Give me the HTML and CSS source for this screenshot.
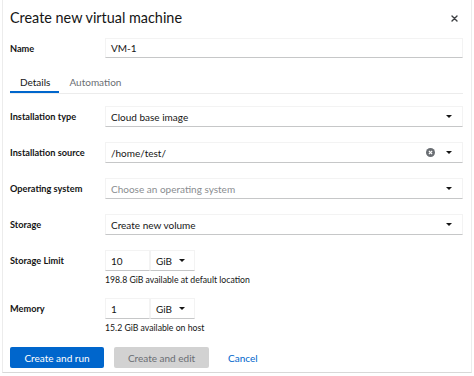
FILE: index.html
```html
<!DOCTYPE html>
<html>
<head>
<meta charset="utf-8">
<link rel="stylesheet" href="styles.css">
</head>
<body>
<div class="modal">
  <header class="header">
    <h1 class="title">Create new virtual machine</h1>
    <button class="close" aria-label="Close">
      <svg width="7" height="7" viewBox="0 0 7 7"><path d="M1 1L6 6M6 1L1 6" stroke="#3c3f42" stroke-width="1.4" stroke-linecap="round"/></svg>
    </button>
  </header>

  <div class="row row-name">
    <label class="label">Name</label>
    <div class="control"><span class="value">VM-1</span></div>
  </div>

  <nav class="tabs">
    <span class="tab active">Details</span>
    <span class="tab">Automation</span>
  </nav>

  <div class="form">
    <div class="row">
      <label class="label">Installation type</label>
      <div class="control select"><span class="value">Cloud base image</span><span class="caret"></span></div>
    </div>
    <div class="row">
      <label class="label">Installation source</label>
      <div class="control select"><span class="value">/home/test/</span>
        <svg class="clear" width="9" height="9" viewBox="0 0 10 10"><circle cx="5" cy="5" r="5" fill="#6a6e73"/><path d="M3.2 3.2L6.8 6.8M6.8 3.2L3.2 6.8" stroke="#fff" stroke-width="1.4"/></svg>
        <span class="caret"></span></div>
    </div>
    <div class="row">
      <label class="label">Operating system</label>
      <div class="control select"><span class="value placeholder">Choose an operating system</span><span class="caret"></span></div>
    </div>
    <div class="row">
      <label class="label">Storage</label>
      <div class="control select"><span class="value">Create new volume</span><span class="caret"></span></div>
    </div>
    <div class="row row-size">
      <label class="label">Storage Limit</label>
      <div class="size">
        <div class="size-inputs">
          <div class="control num"><span class="value">10</span></div>
          <div class="control unit"><span class="value">GiB</span><span class="caret"></span></div>
        </div>
        <div class="helper">198.8 GiB available at default location</div>
      </div>
    </div>
    <div class="row row-size row-mem">
      <label class="label">Memory</label>
      <div class="size">
        <div class="size-inputs">
          <div class="control num"><span class="value">1</span></div>
          <div class="control unit"><span class="value">GiB</span><span class="caret"></span></div>
        </div>
        <div class="helper">15.2 GiB available on host</div>
      </div>
    </div>
  </div>

  <footer class="footer">
    <button class="btn primary">Create and run</button>
    <button class="btn disabled">Create and edit</button>
    <button class="btn link">Cancel</button>
  </footer>
</div>
</body>
</html>
```
FILE: styles.css
```css
html, body {
  margin: 0;
  padding: 0;
  background: #fff;
}
body {
  font-family: "Lato", "Open Sans", sans-serif;
  color: #151515;
  width: 474px;
  height: 376px;
  overflow: hidden;
}
.modal {
  margin-left: 2px;
  width: 453px;
  height: 372px;
  border-left: 1px solid #ececec;
  border-right: 1px solid #ececec;
  border-bottom: 1px solid #d8d8d8;
  padding: 0 8px 0 7px;
  box-sizing: content-box;
  display: flex;
  flex-direction: column;
}
.header {
  display: flex;
  align-items: center;
  justify-content: space-between;
  height: 20px;
  margin-top: 8px;
}
.title {
  margin: 0;
  font-family: "Lato", "Open Sans", sans-serif;
  font-weight: 400;
  font-size: 14.4px;
  line-height: 20px;
}
.close {
  border: 0;
  background: none;
  padding: 0;
  margin-right: 5px;
  width: 7px;
  height: 7px;
  display: flex;
}
.row {
  display: flex;
  align-items: center;
}
.row-name {
  margin-top: 10px;
}
.label {
  width: 95px;
  flex: none;
  font-size: 9.2px;
  font-weight: 700;
}
.control {
  flex: 1;
  height: 20px;
  box-sizing: border-box;
  border: 1px solid #f3f3f3;
  border-bottom-color: #c6c7c8;
  display: flex;
  align-items: center;
  padding: 0 10px 0 5px;
  font-size: 10px;
}
.value {
  flex: 1;
  white-space: nowrap;
}
.placeholder {
  color: #8a8d90;
}
.caret {
  width: 0;
  height: 0;
  border-left: 3px solid transparent;
  border-right: 3px solid transparent;
  border-top: 3.5px solid #151515;
}
.clear {
  margin-right: 11px;
}
.tabs {
  margin-top: 12px;
  display: flex;
  border-bottom: 1px solid #ececec;
  height: 23px;
}
.tab {
  font-size: 10px;
  color: #6a6e73;
  padding: 0 9px 0 10px;
  display: flex;
  align-items: center;
}
.tab.active {
  color: #151515;
  box-shadow: inset 0 -2px 0 #0066cc;
}
.form {
  margin-top: 12px;
  display: flex;
  flex-direction: column;
  gap: 15px;
}
.form .control {
  height: 21px;
}
.row-size {
  align-items: flex-start;
}
.row-size .label {
  line-height: 21px;
}
.row-mem {
  margin-top: -2px;
}
.size {
  display: flex;
  flex-direction: column;
}
.size-inputs {
  display: flex;
}
.num {
  width: 45px;
  flex: none;
}
.unit {
  width: 45px;
  flex: none;
  padding-right: 9px;
}
.helper {
  font-size: 8.7px;
  margin-top: 3px;
  line-height: 11px;
}
.footer {
  margin-top: 14px;
  display: flex;
  gap: 10px;
}
.btn {
  border: 0;
  border-radius: 2px;
  height: 21px;
  font-family: "Lato", "Open Sans", sans-serif;
  font-size: 10px;
  padding: 0;
}
.primary {
  background: #0066cc;
  color: #fff;
  width: 94px;
}
.disabled {
  background: #d2d2d2;
  color: #6a6e73;
  width: 95px;
}
.link {
  background: none;
  color: #0066cc;
  padding: 0 9px;
}
```
